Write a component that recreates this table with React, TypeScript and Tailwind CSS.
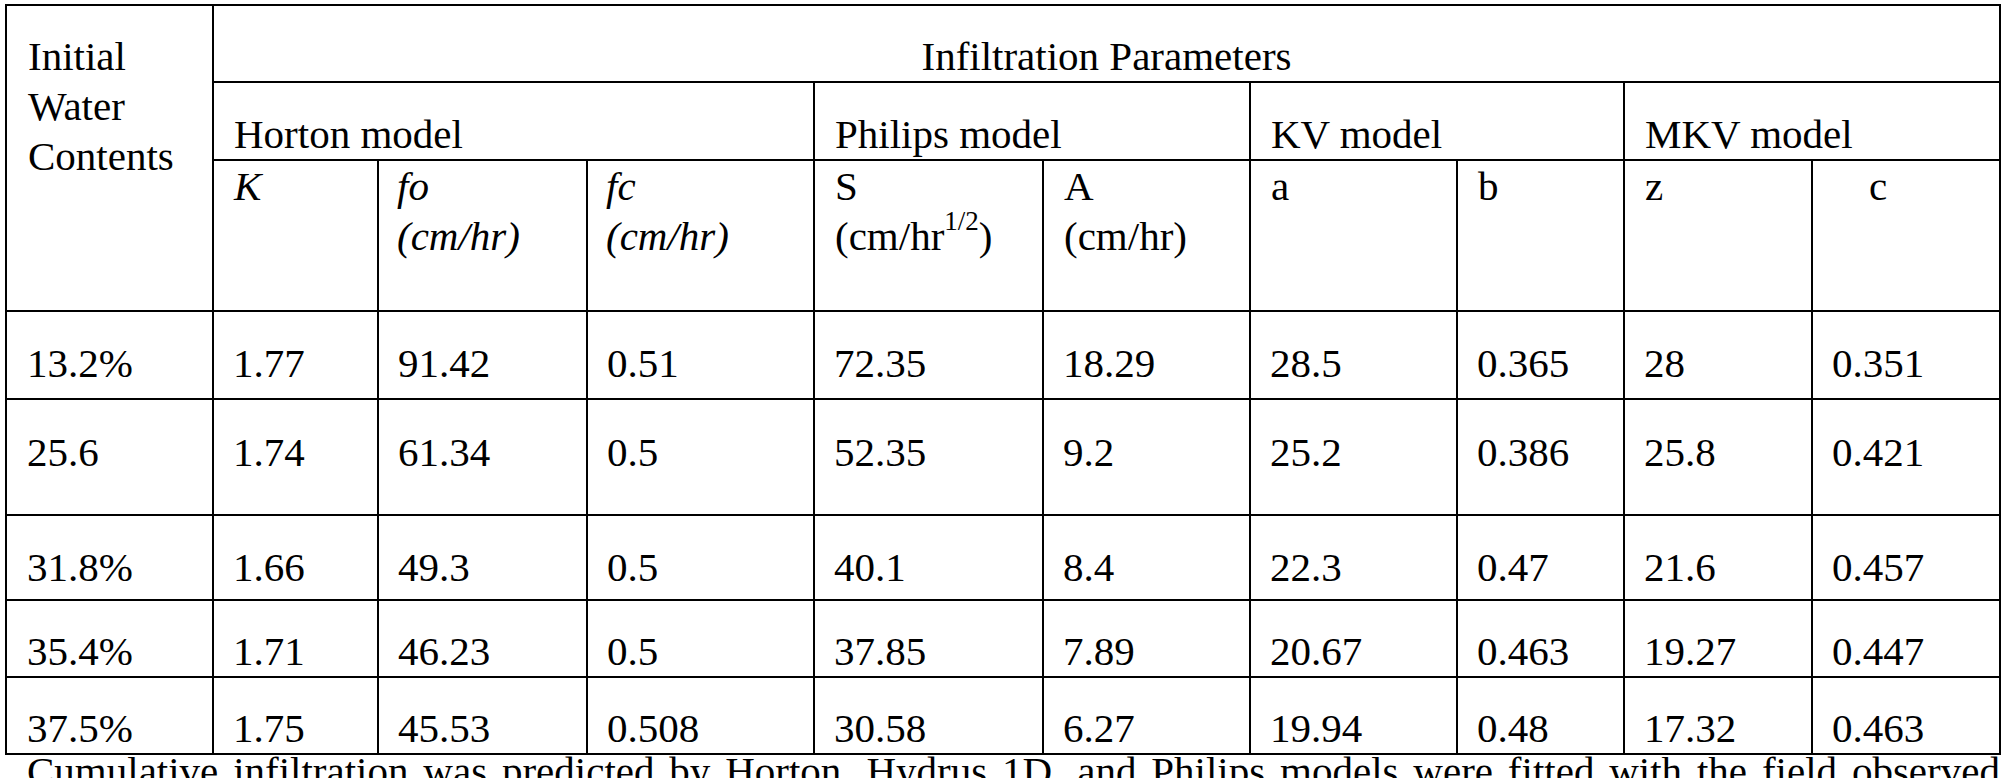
import React from "react";

const cell = "border-r-2 border-b-2 border-black";

const rows: { vals: string[]; pt: string }[] = [
  { vals: ["13.2%", "1.77", "91.42", "0.51", "72.35", "18.29", "28.5", "0.365", "28", "0.351"], pt: "pt-[26px]" },
  { vals: ["25.6", "1.74", "61.34", "0.5", "52.35", "9.2", "25.2", "0.386", "25.8", "0.421"], pt: "pt-[27px]" },
  { vals: ["31.8%", "1.66", "49.3", "0.5", "40.1", "8.4", "22.3", "0.47", "21.6", "0.457"], pt: "pt-[26px]" },
  { vals: ["35.4%", "1.71", "46.23", "0.5", "37.85", "7.89", "20.67", "0.463", "19.27", "0.447"], pt: "pt-[25px]" },
  { vals: ["37.5%", "1.75", "45.53", "0.508", "30.58", "6.27", "19.94", "0.48", "17.32", "0.463"], pt: "pt-[25px]" },
];

export default function App() {
  return (
    <div
      className="min-h-screen w-full bg-white text-black text-[41px] leading-[50px] overflow-hidden"
      style={{ fontFamily: '"Liberation Serif", "Times New Roman", serif' }}
    >
      <div className="ml-[5px] pt-[4px]">
        <div className="grid w-fit border-l-2 border-t-2 border-black grid-cols-[207px_165px_209px_227px_229px_207px_207px_167px_188px_188px] grid-rows-[77px_78px_151px_88px_116px_85px_77px_77px]">
          {/* Header column 1 */}
          <div className={`${cell} row-span-3 pl-[21px] pt-[25px]`}>
            Initial
            <br />
            Water
            <br />
            Contents
          </div>
          <div className={`${cell} col-span-9 text-center pt-[25px]`}>Infiltration Parameters</div>

          {/* Models row */}
          <div className={`${cell} col-span-3 pl-[20px] pt-[26px]`}>Horton model</div>
          <div className={`${cell} col-span-2 pl-[20px] pt-[26px]`}>Philips model</div>
          <div className={`${cell} col-span-2 pl-[20px] pt-[26px]`}>KV model</div>
          <div className={`${cell} col-span-2 pl-[20px] pt-[26px]`}>MKV model</div>

          {/* Units row */}
          <div className={`${cell} pl-[20px] italic`}>K</div>
          <div className={`${cell} pl-[18px] italic`}>
            fo
            <br />
            (cm/hr)
          </div>
          <div className={`${cell} pl-[18px] italic`}>
            fc
            <br />
            (cm/hr)
          </div>
          <div className={`${cell} pl-[20px]`}>
            S
            <br />
            (cm/hr<sup className="text-[27px] leading-none align-[7px]">1/2</sup>)
          </div>
          <div className={`${cell} pl-[20px]`}>
            A
            <br />
            (cm/hr)
          </div>
          <div className={`${cell} pl-[20px]`}>a</div>
          <div className={`${cell} pl-[20px]`}>b</div>
          <div className={`${cell} pl-[20px]`}>z</div>
          <div className={`${cell} pl-[56px]`}>c</div>

          {/* Data rows */}
          {rows.map((r, i) =>
            r.vals.map((v, j) => (
              <div key={`${i}-${j}`} className={`${cell} ${r.pt} ${j === 0 ? "pl-[20px]" : "pl-[19px]"}`}>
                {v}
              </div>
            ))
          )}
        </div>
        <div className="pl-[22px] leading-[33px] whitespace-nowrap [word-spacing:4.6px]">
          Cumulative infiltration was predicted by Horton, Hydrus 1D, and Philips models were fitted with the field observed
        </div>
      </div>
    </div>
  );
}
